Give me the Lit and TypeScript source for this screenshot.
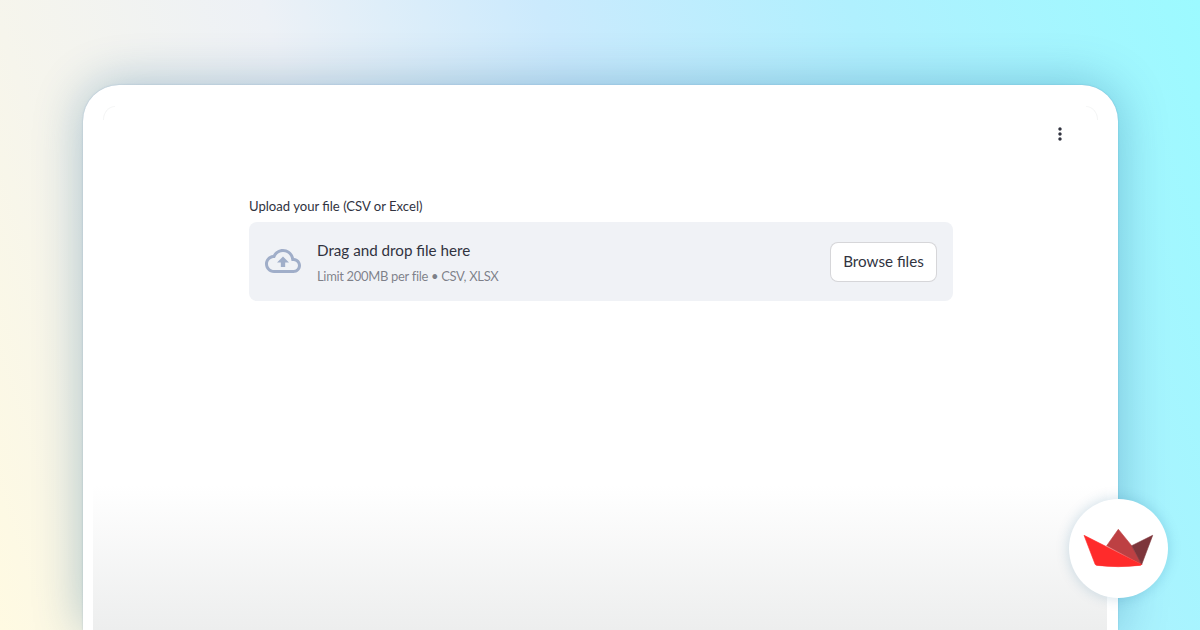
import { LitElement, html, css } from "lit";
import { customElement } from "lit/decorators.js";

@customElement("app-root")
export class AppRoot extends LitElement {
  static styles = css`
    :host {
      display: block;
      width: 1200px;
      height: 630px;
      overflow: hidden;
      position: relative;
      font-family: "Lato", "Noto Sans", sans-serif;
      color: #31333f;
      background: linear-gradient(72deg, #fffae2 0%, #f6f5ec 14%, #edf1f6 33%, #cbeafd 53%, #b0f0fe 75%, #9cfaff 100%);
    }
    .stage {
      height: 630px;
      box-sizing: border-box;
      padding: 85px 82px 0 83px;
      display: flex;
    }
    .card {
      flex: 1;
      position: relative;
      background: #fff;
      border-radius: 36px 36px 0 0;
      box-shadow: 0 0 1.5px rgba(70, 120, 170, 0.45), 0 0 50px rgba(0, 80, 130, 0.32);
      padding: 39px 165px 0 166px;
      overflow: hidden;
    }
    .corner {
      position: absolute;
      top: 21px;
      width: 12px;
      height: 14px;
      border-top: 1px solid #f6f7f7;
      box-sizing: border-box;
    }
    .corner.l {
      left: 20px;
      border-left: 1px solid #f4f5f5;
      border-top-left-radius: 12px 14px;
    }
    .corner.r {
      right: 20px;
      border-right: 1px solid #f4f5f5;
      border-top-right-radius: 12px 14px;
    }
    .fade {
      position: absolute;
      left: 10px;
      right: 11px;
      top: 400px;
      bottom: 0;
      background: linear-gradient(180deg, #ffffff 0%, #edeeee 100%);
    }
    .menu {
      display: flex;
      justify-content: flex-end;
      margin-right: -117px;
      height: 20px;
    }
    .menu svg {
      width: 20px;
      height: 20px;
      fill: #31333f;
    }
    .label {
      margin-top: 52px;
      font-size: 13.1px;
      line-height: 20px;
      height: 20px;
    }
    .drop {
      margin-top: 6px;
      height: 79px;
      box-sizing: border-box;
      background: #f0f2f6;
      border-radius: 8px;
      padding: 0 16px;
      display: flex;
      align-items: center;
    }
    .cloud {
      width: 36px;
      height: 36px;
      fill: #a0aec9;
      margin-right: 16px;
      flex: none;
      margin-top: -1px;
    }
    .copy {
      flex: 1;
      display: flex;
      flex-direction: column;
      gap: 3px;
      padding-top: 2px;
    }
    .title {
      font-size: 15.2px;
      line-height: 24px;
    }
    .limit {
      font-size: 13px;
      line-height: 22px;
      letter-spacing: -0.33px;
      color: rgba(49, 51, 63, 0.6);
    }
    button {
      width: 107px;
      height: 40px;
      box-sizing: border-box;
      background: #fff;
      border: 1px solid rgba(49, 51, 63, 0.2);
      border-radius: 8px;
      font: inherit;
      font-size: 15.2px;
      color: #31333f;
      padding: 0 0 2px;
    }
    .badge {
      position: absolute;
      left: 1069px;
      top: 499px;
      width: 99px;
      height: 99px;
      border-radius: 50%;
      background: #fff;
      box-shadow: 0 0 14px rgba(0, 90, 140, 0.2);
      display: flex;
    }
    .badge svg {
      width: 99px;
      height: 99px;
    }
  `;

  render() {
    return html`
      <div class="stage">
        <main class="card">
          <div class="fade"></div>
          <div class="corner l"></div>
          <div class="corner r"></div>
          <div class="menu">
            <svg viewBox="0 0 24 24"><path d="M12 8c1.1 0 2-.9 2-2s-.9-2-2-2-2 .9-2 2 .9 2 2 2zm0 2c-1.1 0-2 .9-2 2s.9 2 2 2 2-.9 2-2-.9-2-2-2zm0 6c-1.1 0-2 .9-2 2s.9 2 2 2 2-.9 2-2-.9-2-2-2z"/></svg>
          </div>
          <div class="label">Upload your file (CSV or Excel)</div>
          <section class="drop">
            <svg class="cloud" viewBox="0 0 24 24"><path d="M19.35 10.04C18.67 6.59 15.64 4 12 4 9.11 4 6.6 5.64 5.35 8.04 2.34 8.36 0 10.91 0 14c0 3.31 2.69 6 6 6h13c2.76 0 5-2.24 5-5 0-2.64-2.05-4.78-4.65-4.96zM19 18H6c-2.21 0-4-1.79-4-4 0-2.05 1.53-3.76 3.56-3.97l1.07-.11.5-.95C8.08 7.14 9.94 6 12 6c2.62 0 4.88 1.86 5.39 4.43l.3 1.5 1.53.11c1.56.1 2.78 1.41 2.78 2.96 0 1.65-1.35 3-3 3zM8 13h2.55v3h2.9v-3H16l-4-4z"/></svg>
            <div class="copy">
              <div class="title">Drag and drop file here</div>
              <div class="limit">Limit 200MB per file • CSV, XLSX</div>
            </div>
            <button>Browse files</button>
          </section>
        </main>
      </div>
      <div class="badge">
        <svg viewBox="1069 499 99 99" stroke-linejoin="round">
          <path d="M1106.7 545.7 L1118.3 529.3 L1131.7 545.7 L1141.7 564.5 Z" fill="#bd4043" stroke="#bd4043" stroke-width=".6"/>
          <path d="M1131.7 545.7 L1152.7 535.3 L1141.7 564.5 Z" fill="#7d353b" stroke="#7d353b" stroke-width=".6"/>
          <path d="M1084 535.3 L1141.7 564.5 Q1141.3 565.3 1140 565.4 Q1118 568 1097 565.4 Q1095.5 565.3 1095 564 Z" fill="#ff2b2b" stroke="#ff2b2b" stroke-width=".6"/>
        </svg>
      </div>
    `;
  }
}
